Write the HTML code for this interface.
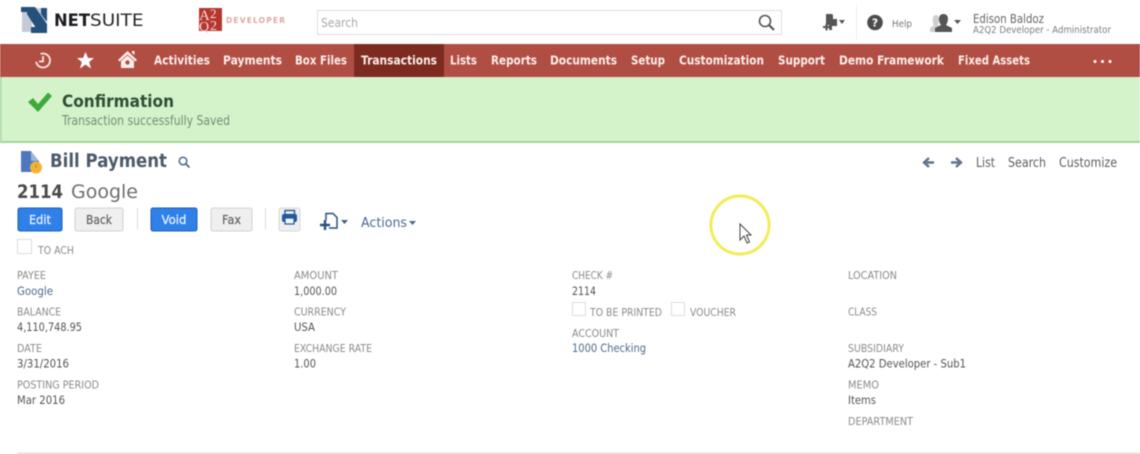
<!DOCTYPE html>
<html><head><meta charset="utf-8"><style>
html,body{margin:0;padding:0;background:#fff;width:1140px;height:454px;overflow:hidden}
svg{display:block;filter:blur(.45px)}
text{font-family:"DejaVu Sans","Liberation Sans",sans-serif}
.n{font-size:12.500px;font-weight:700;fill:#fbeeea}
.l{font-size:11px;fill:#8a8a8a}
.v{font-size:11.500px;fill:#555}
.a{font-size:11.500px;fill:#4d6a8c}
.b{font-size:12.500px;fill:#666;stroke:#666;stroke-width:.25px}
.w{font-size:12.500px;fill:#e4f0ff;stroke:#e4f0ff;stroke-width:.3px}
</style></head><body>
<svg width="1140" height="454" viewBox="0 0 1140 454" xmlns="http://www.w3.org/2000/svg">
<rect width="1140" height="454" fill="#fff"/>
<!-- NetSuite logo -->
<rect x="22" y="12" width="10" height="20" fill="#c3ccd4"/>
<rect x="35" y="8" width="10" height="18" fill="#c3ccd4"/>
<path d="M21 7H34V12H21Z" fill="#24507a"/>
<path d="M27 7H35L47 24V33H39L27 14Z" fill="#24507a"/>
<path d="M31 27H47V33H31Z" fill="#24507a"/>
<path d="M41 8H47V22L41 14Z" fill="#24507a"/>
<text x="54" y="26" font-size="17" font-weight="700" fill="#1c1c22" textLength="36" lengthAdjust="spacingAndGlyphs">NET</text>
<text x="90" y="26" font-size="17" fill="#26262c" textLength="53.5" lengthAdjust="spacingAndGlyphs">SUITE</text>
<!-- A2Q2 logo -->
<rect x="199" y="8" width="23" height="23" fill="#b5362f"/>
<text x="199" y="20" font-size="15" fill="#f5dcd8" style="font-family:'Liberation Serif',serif">A</text>
<text x="210" y="18" font-size="13" fill="#f5dcd8" style="font-family:'Liberation Serif',serif">2</text>
<text x="199" y="31" font-size="14" fill="#f5dcd8" style="font-family:'Liberation Serif',serif">Q</text>
<text x="210" y="30" font-size="14" fill="#f5dcd8" style="font-family:'Liberation Serif',serif">2</text>
<text x="226" y="23" font-size="7.500" font-weight="700" fill="#dba8a2" textLength="59" lengthAdjust="spacing">DEVELOPER</text>
<!-- Search -->
<rect x="317.500" y="10.500" width="464" height="24" fill="#fff" stroke="#dcdcdc"/>
<text x="321" y="27" font-size="12.500" fill="#a9a9a9" textLength="37" lengthAdjust="spacingAndGlyphs">Search</text>
<circle cx="765" cy="21" r="5.500" fill="none" stroke="#555" stroke-width="1.600"/>
<path d="M769 25L774 30" stroke="#555" stroke-width="2.200"/>
<!-- right header -->
<path d="M826 14H832L837 19V26H832V30H829V25H826Z" fill="#555"/>
<path d="M833 14.500L837 19H833Z" fill="#fff"/>
<path d="M823 27H830M826.500 23.500V30.500" stroke="#555" stroke-width="2"/>
<path d="M839 20H845L842 24Z" fill="#555"/>
<line x1="856.500" y1="5" x2="856.500" y2="40" stroke="#eee"/>
<circle cx="875" cy="22.500" r="7.800" fill="#4c4c4c"/>
<text x="875" y="26.500" font-size="11" font-weight="700" fill="#fff" text-anchor="middle">?</text>
<text x="892" y="27" font-size="10" fill="#777" textLength="20" lengthAdjust="spacingAndGlyphs">Help</text>
<path d="M930 32V28L934 25C932 22 932 15 936 15C940 15 940 22 938 25L942 28V32Z" fill="#cfcfcf"/>
<path d="M935 32V28L941 25C938 21 938 14 943.500 14C949 14 949 21 946 25L952 28V32Z" fill="#555"/>
<path d="M954 20H961L957.500 24Z" fill="#555"/>
<text x="973" y="23" font-size="12" fill="#666" textLength="71" lengthAdjust="spacingAndGlyphs">Edison Baldoz</text>
<text x="973" y="33" font-size="10" fill="#7d7d7d" textLength="138" lengthAdjust="spacingAndGlyphs">A2Q2 Developer - Administrator</text>
<!-- Nav -->
<rect y="44" width="1140" height="33" fill="#b14e44"/>
<rect x="354" y="44" width="90" height="33" fill="#7d2b20"/>
<circle cx="43" cy="60.500" r="7" fill="none" stroke="#f7e6e2" stroke-width="1.800" stroke-dasharray="34 10" transform="rotate(-110 43 60.500)"/>
<path d="M43 56V61.500H39" fill="none" stroke="#f7e6e2" stroke-width="1.800"/>
<path d="M85.500 52L88 58H94L89.200 62L91 68.500L85.500 64.500L80 68.500L81.800 62L77 58H83Z" fill="#fff"/>
<path d="M118 60L127.500 51L137 60L135.500 61.500L127.500 54.500L119.500 61.500Z" fill="#fbeeea"/>
<path d="M121 61L127.500 55.500L134 61V68H121Z" fill="#fbeeea"/>
<circle cx="127.500" cy="62.500" r="2.200" fill="#b14e44"/>
<path d="M132 51H134.500V55L132 53Z" fill="#fbeeea"/>
<text class="n" x="154" y="64.500" textLength="56" lengthAdjust="spacingAndGlyphs">Activities</text>
<text class="n" x="223" y="64.500" textLength="59" lengthAdjust="spacingAndGlyphs">Payments</text>
<text class="n" x="295" y="64.500" textLength="52" lengthAdjust="spacingAndGlyphs">Box Files</text>
<text class="n" x="361" y="64.500" textLength="76" lengthAdjust="spacingAndGlyphs">Transactions</text>
<text class="n" x="450" y="64.500" textLength="27" lengthAdjust="spacingAndGlyphs">Lists</text>
<text class="n" x="491" y="64.500" textLength="46" lengthAdjust="spacingAndGlyphs">Reports</text>
<text class="n" x="550" y="64.500" textLength="67" lengthAdjust="spacingAndGlyphs">Documents</text>
<text class="n" x="631" y="64.500" textLength="34" lengthAdjust="spacingAndGlyphs">Setup</text>
<text class="n" x="679" y="64.500" textLength="85" lengthAdjust="spacingAndGlyphs">Customization</text>
<text class="n" x="778" y="64.500" textLength="47" lengthAdjust="spacingAndGlyphs">Support</text>
<text class="n" x="839" y="64.500" textLength="105" lengthAdjust="spacingAndGlyphs">Demo Framework</text>
<text class="n" x="958" y="64.500" textLength="72" lengthAdjust="spacingAndGlyphs">Fixed Assets</text>
<circle cx="1095" cy="61.500" r="1.500" fill="#fff"/><circle cx="1102.500" cy="61.500" r="1.500" fill="#fff"/><circle cx="1110" cy="61.500" r="1.500" fill="#fff"/>
<!-- Confirmation -->
<rect y="77" width="1140" height="66" fill="#d4f3cb"/>
<rect y="141" width="1140" height="2" fill="#a3d39b"/>
<rect y="77" width="1.500" height="66" fill="#a3d39b"/>
<path d="M28 102L33 98L38 104L48 92.500L52 96L38 112Z" fill="#3faa3c"/>
<text x="62" y="107" font-size="16.500" font-weight="700" fill="#2f4f35" textLength="112" lengthAdjust="spacingAndGlyphs">Confirmation</text>
<text x="62" y="125" font-size="13" fill="#6f8f74" textLength="168" lengthAdjust="spacingAndGlyphs">Transaction successfully Saved</text>
<!-- Title -->
<path d="M21 151H31V161H39V172H21Z" fill="#4f77c0"/>
<path d="M31 151L39 161H31Z" fill="#9db4dc"/>
<circle cx="36" cy="167.500" r="6" fill="#f2b234"/>
<path d="M36 164.500V168" stroke="#c98a1a" stroke-width="1.200"/>
<text x="50" y="167" font-size="18.500" font-weight="700" fill="#4d5a6c" textLength="117" lengthAdjust="spacingAndGlyphs">Bill Payment</text>
<circle cx="183" cy="161" r="3.800" fill="none" stroke="#4d6a8c" stroke-width="1.500"/>
<path d="M186 164L189.500 167.500" stroke="#4d6a8c" stroke-width="1.800"/>
<path d="M934 162.500H926M929 158L924 162.500L929 167" fill="none" stroke="#5f7389" stroke-width="2.400"/>
<path d="M951 162.500H959M956 158L961 162.500L956 167" fill="none" stroke="#5f7389" stroke-width="2.400"/>
<text x="976" y="167" font-size="13" fill="#5f5f5f" textLength="19" lengthAdjust="spacingAndGlyphs">List</text>
<text x="1008" y="167" font-size="13" fill="#5f5f5f" textLength="38" lengthAdjust="spacingAndGlyphs">Search</text>
<text x="1059" y="167" font-size="13" fill="#5f5f5f" textLength="58" lengthAdjust="spacingAndGlyphs">Customize</text>
<text x="17" y="198" font-size="19" font-weight="700" fill="#4a4a4a" textLength="46" lengthAdjust="spacingAndGlyphs">2114</text>
<text x="71" y="198" font-size="19" fill="#6e6e6e" textLength="67" lengthAdjust="spacingAndGlyphs">Google</text>
<!-- Buttons -->
<rect x="18" y="208" width="44" height="23" rx="2" fill="#2f80e8" stroke="#1d5fb8"/>
<text class="w" x="29" y="224" textLength="22" lengthAdjust="spacingAndGlyphs">Edit</text>
<rect x="75" y="208" width="48" height="23" rx="2" fill="#efefef" stroke="#d2d2d2"/>
<text class="b" x="86" y="224" textLength="26" lengthAdjust="spacingAndGlyphs">Back</text>
<line x1="137.500" y1="208" x2="137.500" y2="230" stroke="#ddd"/>
<rect x="151" y="208" width="46" height="23" rx="2" fill="#2f80e8" stroke="#1d5fb8"/>
<text class="w" x="161.500" y="224" textLength="25" lengthAdjust="spacingAndGlyphs">Void</text>
<rect x="211" y="208" width="41" height="23" rx="2" fill="#efefef" stroke="#d2d2d2"/>
<text class="b" x="222" y="224" textLength="19" lengthAdjust="spacingAndGlyphs">Fax</text>
<line x1="265.500" y1="208" x2="265.500" y2="230" stroke="#ddd"/>
<rect x="279" y="208" width="21" height="23" rx="2" fill="#efefef" stroke="#d8d8d8"/>
<rect x="285" y="210.500" width="9.500" height="4" fill="#f4f4f4" stroke="#1f5a9e" stroke-width="1.400"/>
<rect x="282" y="214" width="15" height="8" rx="2" fill="#1f5a9e"/>
<rect x="285" y="218" width="9" height="6" fill="#f4f4f4" stroke="#1f5a9e" stroke-width="1.200"/>
<path d="M326 220V213.500H333L337 217.500V228H329" fill="none" stroke="#2a4f7c" stroke-width="1.500"/>
<path d="M320 225H330M325 220V230" stroke="#2a4f7c" stroke-width="2.400"/>
<path d="M341 220H348L344.500 224Z" fill="#3f5f86"/>
<text x="361" y="227" font-size="13" fill="#4a6a90" textLength="46" lengthAdjust="spacingAndGlyphs">Actions</text>
<path d="M409 221H416L412.500 225Z" fill="#4a6a90"/>
<!-- To ACH -->
<rect x="17.500" y="239.500" width="14" height="14" fill="#fff" stroke="#dcdcdc"/>
<text class="l" x="38" y="254" textLength="36" lengthAdjust="spacingAndGlyphs">TO ACH</text>
<!-- col 1 -->
<text class="l" x="17" y="279" textLength="29" lengthAdjust="spacingAndGlyphs">PAYEE</text>
<text class="a" x="17" y="295" textLength="36" lengthAdjust="spacingAndGlyphs">Google</text>
<text class="l" x="17" y="315.500" textLength="44" lengthAdjust="spacingAndGlyphs">BALANCE</text>
<text class="v" x="17" y="331" textLength="65" lengthAdjust="spacingAndGlyphs">4,110,748.95</text>
<text class="l" x="17" y="352" textLength="25" lengthAdjust="spacingAndGlyphs">DATE</text>
<text class="v" x="17" y="367.500" textLength="52" lengthAdjust="spacingAndGlyphs">3/31/2016</text>
<text class="l" x="17" y="388.500" textLength="82" lengthAdjust="spacingAndGlyphs">POSTING PERIOD</text>
<text class="v" x="17" y="404" textLength="48" lengthAdjust="spacingAndGlyphs">Mar 2016</text>
<!-- col 2 -->
<text class="l" x="294" y="279" textLength="44" lengthAdjust="spacingAndGlyphs">AMOUNT</text>
<text class="v" x="294" y="295" textLength="43" lengthAdjust="spacingAndGlyphs">1,000.00</text>
<text class="l" x="294" y="315.500" textLength="52" lengthAdjust="spacingAndGlyphs">CURRENCY</text>
<text class="v" x="294" y="331" textLength="21" lengthAdjust="spacingAndGlyphs">USA</text>
<text class="l" x="294" y="352" textLength="78" lengthAdjust="spacingAndGlyphs">EXCHANGE RATE</text>
<text class="v" x="294" y="367.500" textLength="22" lengthAdjust="spacingAndGlyphs">1.00</text>
<!-- col 3 -->
<text class="l" x="572" y="279" textLength="41" lengthAdjust="spacingAndGlyphs">CHECK #</text>
<text class="v" x="572" y="295" textLength="24" lengthAdjust="spacingAndGlyphs">2114</text>
<rect x="572.500" y="302.500" width="13" height="13" fill="#fff" stroke="#dcdcdc"/>
<text class="l" x="590" y="316" textLength="72" lengthAdjust="spacingAndGlyphs">TO BE PRINTED</text>
<rect x="671.500" y="302.500" width="13" height="13" fill="#fff" stroke="#dcdcdc"/>
<text class="l" x="690" y="316" textLength="46" lengthAdjust="spacingAndGlyphs">VOUCHER</text>
<text class="l" x="572" y="337" textLength="47" lengthAdjust="spacingAndGlyphs">ACCOUNT</text>
<text class="a" x="572" y="352" textLength="74" lengthAdjust="spacingAndGlyphs">1000 Checking</text>
<!-- col 4 -->
<text class="l" x="848" y="279" textLength="49" lengthAdjust="spacingAndGlyphs">LOCATION</text>
<text class="l" x="848" y="315.500" textLength="29" lengthAdjust="spacingAndGlyphs">CLASS</text>
<text class="l" x="848" y="352" textLength="56" lengthAdjust="spacingAndGlyphs">SUBSIDIARY</text>
<text class="v" x="848" y="367.500" textLength="118" lengthAdjust="spacingAndGlyphs">A2Q2 Developer - Sub1</text>
<text class="l" x="848" y="388.500" textLength="31" lengthAdjust="spacingAndGlyphs">MEMO</text>
<text class="v" x="848" y="404" textLength="28" lengthAdjust="spacingAndGlyphs">Items</text>
<text class="l" x="848" y="425" textLength="65" lengthAdjust="spacingAndGlyphs">DEPARTMENT</text>
<!-- cursor circle -->
<circle cx="740" cy="225" r="29" fill="none" stroke="#f1ec58" stroke-width="3"/>
<path d="M740 224V240L744 236L747 243L749.500 242L746.500 235H751Z" fill="#fff" stroke="#444" stroke-width="1"/>
<!-- bottom line -->
<rect x="17" y="452.500" width="1123" height="1.500" fill="#e6dccb"/>
</svg>
</body></html>
